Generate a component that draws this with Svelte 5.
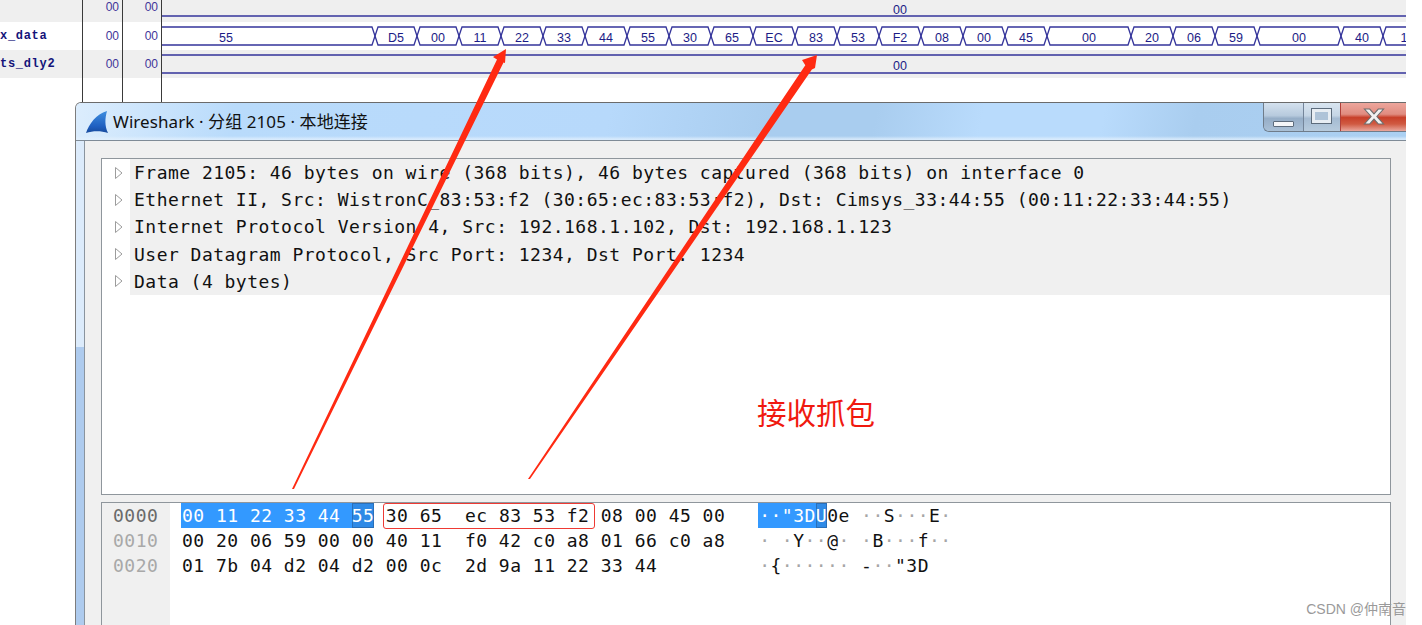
<script>
  const step = 42;
  const start = 375;
  const origin = 162;
  const top = 5;
  const bot = 23;
  const cells = [
    ['D5',1],['00',1],['11',1],['22',1],['33',1],['44',1],['55',1],['30',1],['65',1],['EC',1],['83',1],['53',1],['F2',1],['08',1],['00',1],['45',1],['00',2],['20',1],['06',1],['59',1],['00',2],['40',1],['1',1]
  ];
  let pos = start - origin;
  const segs = [{ label: '55', a: 0, b: pos, open: true }];
  for (const [label, n] of cells) {
    segs.push({ label, a: pos, b: pos + n * step });
    pos += n * step;
  }
  const w = 1244;
  segs.forEach((s) => {
    s.x = s.open ? 64 : (s.a + s.b) / 2;
    const l = s.a + 3;
    const r = Math.min(s.b - 3, w + 20);
    const mid = (top + bot) / 2;
    s.d = s.open
      ? `M0 ${top}H${r}L${s.b} ${mid}L${r} ${bot}H0`
      : `M${s.b} ${mid}L${r} ${top}H${l}L${s.a} ${mid}L${l} ${bot}H${r}Z`;
  });
  segs[segs.length - 1].x = 1242;

  const rows = [
    { name: '', a: '00', b: '00', cls: 'gray first' },
    { name: 'x_data', a: '00', b: '00', cls: 'bus' },
    { name: 'ts_dly2', a: '00', b: '00', cls: 'gray' }
  ];

  const tree = [
    'Frame 2105: 46 bytes on wire (368 bits), 46 bytes captured (368 bits) on interface 0',
    'Ethernet II, Src: WistronC_83:53:f2 (30:65:ec:83:53:f2), Dst: Cimsys_33:44:55 (00:11:22:33:44:55)',
    'Internet Protocol Version 4, Src: 192.168.1.102, Dst: 192.168.1.123',
    'User Datagram Protocol, Src Port: 1234, Dst Port: 1234',
    'Data (4 bytes)'
  ];

  const dot = (t) => t.split(/(·+)/).filter(Boolean).map((p) => ({ t: p, d: p[0] === '·' }));
</script>

<div class="page">
  <section class="wave">
    {#each rows as r, i}
      <div class="row {r.cls}">
        <div class="name">{r.name}</div>
        <div class="val">{r.a}</div>
        <div class="val">{r.b}</div>
        <div class="trace">
          {#if i === 1}
            <svg width="1244" height="28" viewBox="0 0 1244 28">
              {#each segs as s}
                <path d={s.d} class="line" />
                <text x={s.x} y="19.5" text-anchor="middle" class="lbl">{s.label}</text>
              {/each}
            </svg>
          {:else if i === 0}
            <svg width="1244" height="22" viewBox="0 0 1244 22">
              <path d="M0 16H1244" class="line" />
              <text x="738" y="13.5" text-anchor="middle" class="lbl">00</text>
            </svg>
          {:else}
            <svg width="1244" height="28" viewBox="0 0 1244 28">
              <path d="M0 5H1244M0 23H1244" class="line" />
              <text x="738" y="19.5" text-anchor="middle" class="lbl">00</text>
            </svg>
          {/if}
        </div>
      </div>
    {/each}
    <div class="tail"></div>
  </section>

  <section class="window">
    <header class="titlebar">
      <svg class="fin" width="24" height="24" viewBox="0 0 24 24">
        <defs>
          <linearGradient id="finG" x1="0" y1="0" x2="0" y2="1">
            <stop offset="0" stop-color="#3f8fe0" />
            <stop offset="0.7" stop-color="#1f5fc0" />
            <stop offset="1" stop-color="#174a9c" />
          </linearGradient>
        </defs>
        <path d="M1 23C4 14 11 4 22 1C20 8 19.500 16 23 23C16 20.500 8 20.500 1 23Z" fill="url(#finG)" />
      </svg>
      <span class="title">Wireshark · 分组 2105 · 本地连接</span>
      <div class="controls">
        <div class="btn min"><i></i></div>
        <div class="btn max"><i></i></div>
        <div class="btn close">
          <svg width="22" height="17" viewBox="0 0 20 16">
            <path d="M1 1H6L10 5.500L14 1H19L12.700 8L19 15H14L10 10.500L6 15H1L7.300 8Z" fill="#f1f1f1" stroke="#6d6d6d" stroke-width="1" />
          </svg>
        </div>
      </div>
    </header>
    <div class="body">
      <div class="client">
        <div class="panel treepanel">
          <ul class="tree">
            {#each tree as t}
              <li>
                <svg class="twist" width="10" height="14" viewBox="0 0 10 14"><path d="M1.500 1.500L8 7L1.500 12.500Z" fill="#fff" stroke="#9c9c9c" /></svg>
                <span class="txt">{t}</span>
              </li>
            {/each}
          </ul>
        </div>
        <div class="panel hexpanel">
          <div class="offsets">
            <div class="off first">0000</div>
            <div class="off">0010</div>
            <div class="off">0020</div>
          </div>
          <div class="hex">
            <div class="hl"><span class="sel">00 11 22 33 44 <span class="cur">55</span></span>{' '}<span class="boxed">30 65  ec 83 53 f2</span>{' 08 00 45 00   '}<span class="sel">··"3D<span class="cur">U</span></span>{'0e '}{#each dot('··S···E·') as p}{#if p.d}<span class="dot">{p.t}</span>{:else}{p.t}{/if}{/each}</div>
            <div class="hl">{'00 20 06 59 00 00 40 11  f0 42 c0 a8 01 66 c0 a8   '}{#each dot('· ·Y··@· ·B···f··') as p}{#if p.d}<span class="dot">{p.t}</span>{:else}{p.t}{/if}{/each}</div>
            <div class="hl">{'01 7b 04 d2 04 d2 00 0c  2d 9a 11 22 33 44         '}{#each dot('·{······ -··"3D') as p}{#if p.d}<span class="dot">{p.t}</span>{:else}{p.t}{/if}{/each}</div>
          </div>
        </div>
      </div>
    </div>
  </section>

  <svg class="arrows" width="1422" height="625" viewBox="0 0 1422 625">
    <polygon points="292,489 497,59.500 493,57 506,49 505,63 503.500,62.500 294,489" />
    <polygon points="528,479 805.300,65.200 802,60 817,55 815,68 811.900,69.600 530,479" />
  </svg>

  <div class="note">接收抓包</div>
  <div class="mark">CSDN @仲南音</div>
</div>

<style>
  :global(body) {
    margin: 0;
    background: #fff;
  }
  .page {
    position: relative;
    width: 1422px;
    height: 625px;
    overflow: hidden;
    background: #fff;
  }
  .wave {
    width: 1406px;
    display: flex;
    flex-direction: column;
    height: 102px;
  }
  .row {
    display: grid;
    grid-template-columns: 83px 40px 39px 1fr;
    height: 28px;
  }
  .row.first {
    height: 22px;
  }
  .gray {
    background: #efefef;
  }
  .name {
    font: bold 12px/29px "Liberation Mono", monospace;
    letter-spacing: 0.7px;
    color: #14147a;
    white-space: nowrap;
    border-right: 1px solid #3a3a3a;
  }
  .val {
    font: 12px/28px "Liberation Sans", sans-serif;
    color: #3f3599;
    text-align: right;
    padding-right: 3px;
    border-right: 1px solid #3a3a3a;
  }
  .first .val {
    line-height: 15px;
  }
  .trace svg {
    display: block;
  }
  .line {
    fill: none;
    stroke: #35359b;
    stroke-width: 1.300;
  }
  .lbl {
    font: 12.500px "Liberation Sans", sans-serif;
    fill: #1c1c86;
  }
  .tail {
    flex: 1;
    width: 162px;
    background:
      linear-gradient(#3a3a3a, #3a3a3a) 82px 0 / 1px 100% no-repeat,
      linear-gradient(#3a3a3a, #3a3a3a) 122px 0 / 1px 100% no-repeat,
      linear-gradient(#3a3a3a, #3a3a3a) 161px 0 / 1px 100% no-repeat;
  }
  .window {
    position: absolute;
    left: 75px;
    top: 102px;
    width: 1331px;
    height: 523px;
    display: flex;
    flex-direction: column;
    border-top: 1px solid #6b6b6b;
    border-left: 1px solid #7d7d7d;
    border-top-left-radius: 6px;
    box-sizing: border-box;
    overflow: hidden;
    background: linear-gradient(#dcebfb 0 244px, #aecbee 244px);
  }
  .titlebar {
    height: 38px;
    flex: none;
    display: flex;
    align-items: flex-start;
    box-sizing: border-box;
    padding-left: 9px;
    border-bottom: 1px solid #7f8b97;
    background:
      linear-gradient(transparent 33px, rgba(226, 240, 253, 0.75) 36px),
      linear-gradient(101deg, #dcedfd 0, #b9dbfb 12%, #b7d9fb 40%, #a9cdef 52%, #a9cdef 60%, #b9dbfc 68%, #b9dbfc 77%, #a9cdef 84%, #abd0f2 100%);
  }
  .fin {
    margin-top: 7px;
    flex: none;
  }
  .title {
    margin-left: 4px;
    margin-top: 6px;
    font: 17px/26px "Noto Sans", "Noto Sans CJK SC", sans-serif;
    letter-spacing: 0.08px;
    color: #111;
    white-space: nowrap;
  }
  .controls {
    margin-left: auto;
    display: flex;
    height: 28px;
    border: 1px solid #6f7c8a;
    border-top: 0;
    border-right: 0;
    border-bottom-left-radius: 6px;
    overflow: hidden;
  }
  .btn {
    height: 100%;
    display: flex;
    align-items: center;
    justify-content: center;
    box-sizing: border-box;
  }
  .min {
    width: 40px;
    border-right: 1px solid #74859a;
    background: linear-gradient(#d4e1ee, #b7cadd 45%, #96aec7 55%, #a9c0d6);
    align-items: flex-end;
    padding-bottom: 4px;
  }
  .min i {
    display: block;
    width: 19px;
    height: 4px;
    background: #f4f6f8;
    border: 1px solid #5d6c7c;
    border-radius: 1px;
  }
  .max {
    width: 37px;
    border-right: 1px solid #b0403a;
    background: linear-gradient(#d9e5f0, #c5d5e5 45%, #a5bbd2 55%, #b7cbdd);
    padding-right: 2px;
    padding-bottom: 2px;
  }
  .max i {
    display: block;
    width: 13px;
    height: 8px;
    border: 3px solid #e7edf3;
    outline: 1px solid #5d6c7c;
    background: #aec3d8;
  }
  .close {
    flex: 1;
    width: 65px;
    background: linear-gradient(#eda69c, #e08c80 40%, #c8402a 52%, #d05a42 75%, #e9a79d);
    padding-bottom: 2px;
  }
  .body {
    flex: 1;
    min-height: 0;
    display: flex;
    padding-left: 8px;
  }
  .client {
    flex: 1;
    display: flex;
    flex-direction: column;
    gap: 7px;
    box-sizing: border-box;
    background: #f0f0f0;
    border-left: 1px solid #8a949e;
    padding: 17px 15px 0 16px;
  }
  .panel {
    box-sizing: border-box;
    background: #fff;
    border: 1px solid #8f969c;
  }
  .treepanel {
    height: 337px;
    flex: none;
  }
  .tree {
    list-style: none;
    margin: 0;
    padding: 0;
  }
  .tree li {
    display: flex;
    align-items: center;
    height: 27.200px;
  }
  .twist {
    flex: none;
    margin-left: 12px;
    margin-right: 6px;
  }
  .txt {
    flex: 1;
    height: 100%;
    padding-left: 4px;
    background: #f0f0f0;
    font: 18px/27px "DejaVu Sans Mono", monospace;
    letter-spacing: 0.48px;
    color: #111;
    white-space: pre;
  }
  .hexpanel {
    flex: 1;
    display: flex;
    min-height: 0;
    border-bottom: 0;
  }
  .offsets {
    width: 68px;
    flex: none;
    background: #f0f0f0;
    padding-left: 11px;
    box-sizing: border-box;
    font: 18px/25px "DejaVu Sans Mono", monospace;
    letter-spacing: 0.48px;
    color: #a8a8a8;
  }
  .off.first {
    color: #6a6a6a;
  }
  .hex {
    margin-left: 12px;
    font: 18px/25px "DejaVu Sans Mono", monospace;
    letter-spacing: 0.48px;
    color: #111;
  }
  .hl {
    height: 25px;
    white-space: pre;
  }
  .sel {
    display: inline-block;
    height: 25px;
    background: #3399ff;
    color: #fff;
    box-shadow: -1px 0 0 #3399ff;
  }
  .cur {
    display: inline-block;
    height: 25px;
    box-sizing: border-box;
    background: #2f8ae6;
    box-shadow: inset 0 0 0 1px #2a6fb8;
  }
  .boxed {
    position: relative;
    display: inline-block;
    height: 25px;
  }
  .boxed::after {
    content: "";
    position: absolute;
    left: -3px;
    right: -6px;
    top: 0;
    bottom: -1px;
    border: 1px solid #ee3a34;
    border-radius: 3px;
  }
  .dot {
    color: #a6a6a6;
  }
  .arrows {
    position: absolute;
    left: 0;
    top: 0;
    pointer-events: none;
  }
  .arrows polygon {
    fill: #ff2a12;
  }
  .note {
    position: absolute;
    left: 757px;
    top: 390px;
    font: 29.500px/42px "Noto Sans CJK SC", sans-serif;
    color: #f0190f;
    white-space: nowrap;
  }
  .mark {
    position: absolute;
    right: 16px;
    top: 599px;
    font: 14px/20px "Liberation Sans", "Noto Sans CJK SC", sans-serif;
    color: #9a9a9a;
    white-space: nowrap;
  }
</style>
